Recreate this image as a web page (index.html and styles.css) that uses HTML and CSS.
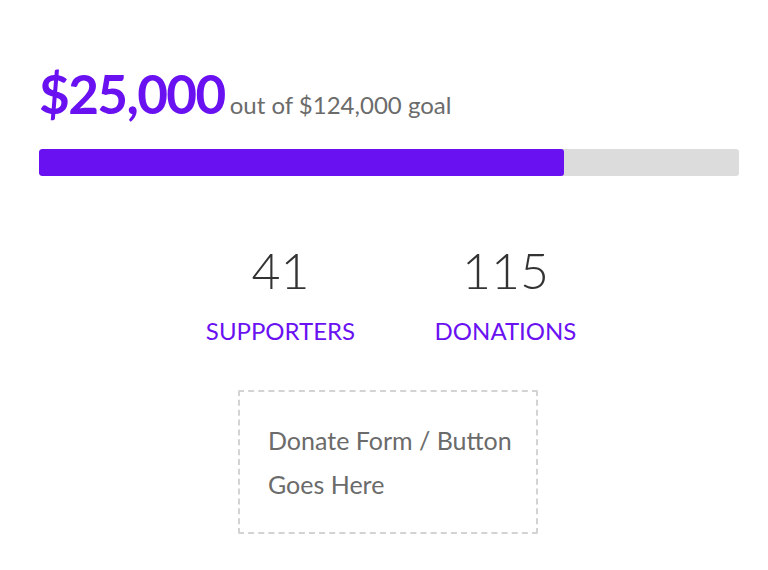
FILE: index.html
```html
<!DOCTYPE html>
<html>
<head>
<meta charset="utf-8">
<link rel="stylesheet" href="styles.css">
</head>
<body>
<main class="campaign">
  <div class="raised">
    <span class="amount">$25,000</span>
    <span class="goal">out of $124,000 goal</span>
  </div>
  <div class="bar"><div class="fill" style="width:75%"></div></div>
  <div class="stats">
    <div class="stat">
      <div class="num">41</div>
      <div class="label">SUPPORTERS</div>
    </div>
    <div class="stat">
      <div class="num">115</div>
      <div class="label">DONATIONS</div>
    </div>
  </div>
  <div class="donate">Donate Form / Button Goes Here</div>
</main>
</body>
</html>
```
FILE: styles.css
```css
* { box-sizing: border-box; }
html, body { margin: 0; padding: 0; background: #fff; }
body { font-family: Lato, "Open Sans", sans-serif; }
.campaign {
  width: 700px;
  margin-left: 39px;
  padding-top: 64px;
}
.raised {
  display: flex;
  align-items: baseline;
  gap: 5px;
  line-height: 60px;
}
.amount {
  font-size: 53px;
  font-weight: 700;
  letter-spacing: -1.6px;
  color: #6a11f2;
}
.goal {
  font-size: 24px;
  color: #6b6b6b;
}
.bar {
  margin-top: 14px;
  height: 27px;
  background: #dcdcdc;
  border-radius: 3px;
  overflow: hidden;
}
.fill {
  height: 100%;
  background: #6a11f2;
  border-radius: 3px;
}
.stats {
  display: grid;
  grid-template-columns: 225px 225px;
  justify-content: center;
  padding-left: 8px;
  margin-top: 64px;
}
.stat { text-align: center; }
.num {
  font-size: 50px;
  font-weight: 300;
  color: #333;
  line-height: 60px;
}
.label {
  margin-top: 16px;
  font-size: 24px;
  color: #6a11f2;
  line-height: 30px;
}
.donate {
  width: 300px;
  margin: 44px auto 0;
  position: relative;
  left: -1px;
  border: 2px dashed #d3d3d3;
  padding: 26px 6px 26px 28px;
  font-size: 25px;
  line-height: 44px;
  color: #6b6b6b;
  border-radius: 2px;
}
```
